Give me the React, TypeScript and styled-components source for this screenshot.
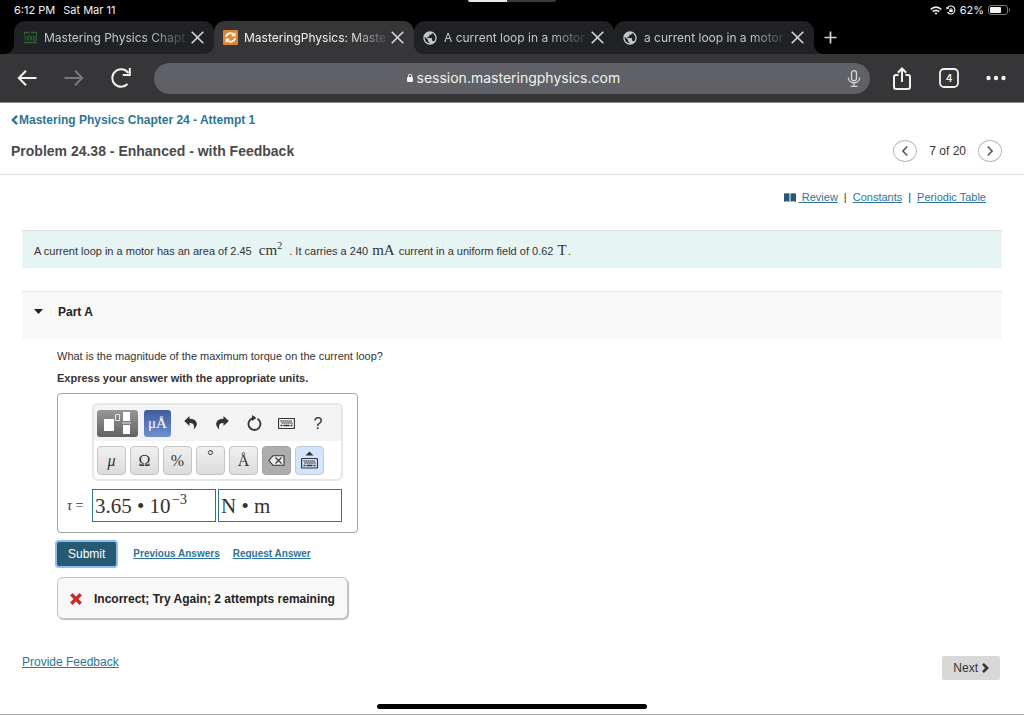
import React from "react";
import styled, { createGlobalStyle, css } from "styled-components";
import { MdPublic } from "react-icons/md";

const sans = `"Liberation Sans", Arial, sans-serif`;
const ui = `Inter, "Liberation Sans", sans-serif`;
const serif = `"Liberation Serif", "Times New Roman", serif`;
const chrome = "#363639";
const dark = "#202124";
const teal = "#2d7596";

const GlobalStyle = createGlobalStyle`
  * { box-sizing: border-box; }
  body { margin: 0; background: #fff; color: #333; font: 11px/16px ${sans}; }
  button, input { font: inherit; color: inherit; margin: 0; padding: 0; border: 0; background: none; }
  svg { display: block; flex: none; }
  h1, h2, p { margin: 0; }
`;

const Screen = styled.div`
  min-height: 100vh;
  display: flex;
  flex-direction: column;
  border-bottom: 1px solid #aaa;
`;

/* Browser frame */

const StatusBar = styled.div`
  position: relative;
  display: flex;
  align-items: flex-start;
  justify-content: space-between;
  height: 21px;
  padding: 0 14px;
  background: #000;
  color: #f2f2f2;
  font: 11px/20px ${ui};
`;
const StatusGroup = styled.div<{ $gap: number }>`
  display: flex;
  align-items: center;
  gap: ${(p) => p.$gap}px;
`;
const SplitHandle = styled.div`
  position: absolute;
  top: 0;
  left: 50%;
  width: 88px;
  height: 2px;
  transform: translateX(-50%);
  border-radius: 0 0 2px 2px;
  background: linear-gradient(90deg, #e8e8e8 44%, #3a3a3c 44%);
`;

const TabStrip = styled.div`
  display: flex;
  align-items: stretch;
  height: 33px;
  padding-left: 14px;
  background: #000;
`;
const Tab = styled.div<{ $active?: boolean }>`
  --tab: ${(p) => (p.$active ? chrome : dark)};
  position: relative;
  z-index: ${(p) => (p.$active ? 1 : 0)};
  flex: 0 1 200px;
  min-width: 0;
  display: flex;
  align-items: center;
  gap: 6px;
  padding: 0 10px 0 8px;
  border-radius: 11px 11px 0 0;
  background: var(--tab);
  color: ${(p) => (p.$active ? "#f1f1f1" : "#c4c7c9")};
  font: 12px/18px ${ui};

  &::before,
  &::after {
    content: "";
    position: absolute;
    bottom: 0;
    width: 10px;
    height: 10px;
  }
  &::before {
    right: 100%;
    background: radial-gradient(circle at 0 0, transparent 10px, var(--tab) 10px);
  }
  &::after {
    left: 100%;
    background: radial-gradient(circle at 100% 0, transparent 10px, var(--tab) 10px);
  }
`;
const TabIcon = styled.span`
  width: 16px;
  display: flex;
  justify-content: center;
`;
const TabTitle = styled.span`
  flex: 1;
  min-width: 0;
  white-space: nowrap;
  mask-image: linear-gradient(90deg, #000 calc(100% - 36px), rgba(0, 0, 0, 0.15));
`;
const TabButton = styled.button`
  display: flex;
  color: #d5d7da;
`;
const NewTab = styled(TabButton)`
  align-items: center;
  padding: 0 10px;
`;

const Toolbar = styled.div`
  display: flex;
  align-items: center;
  height: 49px;
  padding: 0 5px 0 3px;
  border-bottom: 1px solid #8d8d8f;
  background: ${chrome};
  color: #f1f1f1;
`;
const ToolbarButton = styled.button<{ $dim?: boolean }>`
  width: 47px;
  height: 40px;
  display: flex;
  align-items: center;
  justify-content: center;
  color: ${(p) => (p.$dim ? "#77787b" : "#f1f1f1")};
`;
const AddressBar = styled.div`
  flex: 1;
  min-width: 0;
  height: 31px;
  margin: 0 8px 0 10px;
  padding: 0 9px 0 26px;
  display: flex;
  align-items: center;
  border-radius: 16px;
  background: #5f6166;
`;
const Address = styled.div`
  flex: 1;
  display: flex;
  align-items: center;
  justify-content: center;
  gap: 4px;
`;
const AddressInput = styled.input`
  width: 204px;
  font: 14px/20px ${ui};
  color: #f1f1f1;
`;

/* Assignment page */

const Header = styled.header`
  padding: 8px 22px 11px 11px;
  border-bottom: 1px solid #ddd;
`;
const Breadcrumb = styled.a`
  display: inline-flex;
  align-items: center;
  gap: 1px;
  color: ${teal};
  font: bold 12px/18px ${sans};
  text-decoration: none;
`;
const TitleRow = styled.div`
  display: flex;
  align-items: center;
  justify-content: space-between;
  height: 24px;
  margin-top: 10px;
`;
const Title = styled.h1`
  color: #4a4a4a;
  font: bold 14px/18px ${sans};
`;
const Pager = styled.nav`
  display: flex;
  align-items: center;
  gap: 12px;
  font-size: 12px;
`;
const RoundButton = styled.button`
  width: 24px;
  height: 22px;
  display: flex;
  align-items: center;
  justify-content: center;
  border: 1px solid #bbb;
  border-radius: 50%;
  color: #555;
`;

const Content = styled.main`
  flex: 1;
  padding: 14px 22px 0;
`;
const Resources = styled.nav`
  display: flex;
  justify-content: flex-end;
  align-items: center;
  gap: 6px;
  padding-right: 16px;
  line-height: 16px;
`;
const ReviewGroup = styled.span`
  display: flex;
  align-items: center;
  gap: 3px;
`;
const Link = styled.a<{ $bold?: boolean; $size?: number }>`
  color: ${teal};
  font-weight: ${(p) => (p.$bold ? "bold" : "normal")};
  font-size: ${(p) => p.$size ?? 11}px;
  white-space: pre;
  text-decoration: underline;
`;
const Intro = styled.p`
  margin-top: 25px;
  padding: 11px 12px 8px;
  border-top: 1px solid #d6dfde;
  background: #e7f4f4;
  line-height: 18px;
`;
const Unit = styled.span`
  margin: 0 1px;
  font: 15px/16px ${serif};

  sup {
    font-size: 10px;
    line-height: 8px;
    vertical-align: 6px;
  }
`;
const PartHeader = styled.button`
  width: 100%;
  height: 48px;
  margin-top: 23px;
  padding: 0 12px 8px;
  display: flex;
  align-items: center;
  gap: 15px;
  border-top: 1px solid #e6e6e6;
  background: #f8f8f8;
  color: #222;
  font: bold 12px/18px ${sans};
`;
const Part = styled.section`
  padding: 9px 35px 0;
`;
const Prompt = styled.p<{ $bold?: boolean }>`
  margin-bottom: 6px;
  font-weight: ${(p) => (p.$bold ? "bold" : "normal")};
`;

const Editor = styled.div`
  width: 301px;
  max-width: 100%;
  margin-top: 7px;
  padding: 9px 14px 10px 7px;
  border: 1px solid #a4a4a4;
  border-radius: 4px;
`;
const Palette = styled.div`
  margin-left: 27px;
  border: 2px solid #e6e6e6;
  border-radius: 6px;
  overflow: hidden;
`;
const PaletteTop = styled.div`
  display: flex;
  align-items: center;
  height: 36px;
  padding: 0 3px;
  gap: 6px;
  background: #f3f3f3;
  color: #333;
`;
const PaletteBottom = styled.div`
  display: flex;
  align-items: center;
  height: 38px;
  padding: 0 3px;
  gap: 4px;
`;
const Mode = styled.button<{ $active?: boolean }>`
  width: ${(p) => (p.$active ? 27 : 41)}px;
  height: 27px;
  display: flex;
  align-items: center;
  justify-content: center;
  border-radius: 3px;
  background: ${(p) =>
    p.$active ? "linear-gradient(#3f5c9f, #6f90d0)" : "linear-gradient(#97979b, #626262)"};
  color: #fff;
  font: 15px/27px ${serif};
`;
const Tool = styled.button`
  width: 26px;
  height: 27px;
  display: flex;
  align-items: center;
  justify-content: center;
  font: 16px/27px ${sans};
`;
const keyTone = {
  plain: css`border-color: #c4c4c4; background: linear-gradient(#f0f0f0, #dcdcdc);`,
  dark: css`border-color: #a2a2a2; background: #adadad;`,
  blue: css`border-color: #bccbdd; background: #d3e4fb;`,
};
const Key = styled.button<{ $tone?: keyof typeof keyTone; $raised?: boolean }>`
  width: 29px;
  height: 29px;
  display: flex;
  align-items: ${(p) => (p.$raised ? "flex-start" : "center")};
  justify-content: center;
  border: 1px solid;
  border-radius: 4px;
  font: 16px/${(p) => (p.$raised ? 18 : 27)}px ${serif};
  ${(p) => keyTone[p.$tone ?? "plain"]}
`;
const Answer = styled.div`
  display: flex;
  align-items: center;
  gap: 2px;
  margin: 8px 1px 0 0;
`;
const AnswerLabel = styled.label`
  width: 25px;
  padding-left: 2px;
  font: 14px/16px ${serif};
  white-space: nowrap;
`;
const Field = styled.div`
  flex: 1;
  min-width: 0;
  height: 33px;
  display: flex;
  align-items: center;
  padding: 0 2px;
  border: 1px solid ${teal};
`;
const FieldInput = styled.input<{ $width?: number }>`
  width: ${(p) => (p.$width ? `${p.$width}px` : "100%")};
  font: 21px/28px ${serif};
`;
const Exponent = styled.input`
  width: 24px;
  align-self: flex-start;
  font: 14px/20px ${serif};
`;

const Actions = styled.div`
  display: flex;
  align-items: center;
  gap: 13px;
  margin-top: 9px;
`;
const Submit = styled.button`
  height: 24px;
  margin-right: 4px;
  padding: 0 11px;
  border-radius: 2px;
  background: #255a70;
  box-shadow: 0 0 0 2px #8fbcf8;
  color: #fff;
  font-size: 12px;
`;
const Result = styled.div`
  width: fit-content;
  height: 42px;
  display: flex;
  align-items: center;
  gap: 12px;
  margin-top: 11px;
  padding: 1px 12px 0;
  border: 1px solid #c3c3c3;
  border-radius: 6px;
  background: #f8f8f8;
  box-shadow: 1px 1px 1px #bbb;
  color: #222;
  font: bold 12px/16px ${sans};
`;
const Footer = styled.footer`
  display: flex;
  align-items: flex-start;
  justify-content: space-between;
  padding: 0 24px 34px 22px;
`;
const FooterLink = styled(Link)`
  line-height: 12px;
`;
const Next = styled.button`
  height: 24px;
  padding: 0 11px;
  display: flex;
  align-items: center;
  gap: 4px;
  border-radius: 2px;
  background: #d8d8d8;
  font-size: 12px;
`;
const HomeIndicator = styled.div`
  position: fixed;
  bottom: 6px;
  left: 50%;
  width: 270px;
  height: 5px;
  transform: translateX(-50%);
  border-radius: 3px;
  background: #000;
`;

/* Icons */

type StrokeProps = { w: number; h: number; s?: number; children: React.ReactNode };
const Stroke = ({ w, h, s = 2, children }: StrokeProps) => (
  <svg width={w} height={h} viewBox={`0 0 ${w} ${h}`} fill="none" stroke="currentColor" strokeWidth={s} aria-hidden>
    {children}
  </svg>
);
const Close = () => <Stroke w={13} h={13} s={1.6}><path d="M.7.7l11.600 11.600M12.300.7.7 12.300" /></Stroke>;
const Keyboard = () => (
  <Stroke w={17} h={11} s={1}>
    <rect x=".5" y=".5" width="16" height="10" rx="1" strokeWidth="1.2" />
    <path d="M2.500 3h12M3.500 5h11" strokeWidth="1.300" strokeDasharray="1.200 .8" />
    <path d="M2.500 7.500h2m1 0h6m1 0h2" strokeWidth="1.300" />
  </Stroke>
);
const Undo = ({ flip }: { flip?: boolean }) => (
  <svg width="13" height="14" viewBox="0 0 13 14" fill="currentColor" aria-hidden>
    <path
      transform={flip ? "matrix(-1 0 0 1 13 0)" : undefined}
      d="M5.500 0 .2 5l5.300 5V7c3.600-.1 5.300 1.500 4.200 6.500C12.300 11 13.200 9 12.700 7c-.7-3-3.400-4.200-7.200-4.200z"
    />
  </svg>
);
const Sheets = () => (
  <svg width="13" height="13" viewBox="0 0 13 13" fill="none" stroke="#2f6337" aria-hidden>
    <path d="M0 1.500h5.500M7 1.500h6M0 11.500h13" strokeWidth="1.400" />
    <path d="M1 4.500v5M3 4.500v3.500l1.500 1.500V4.500M6 4.500l1 5 1-5M9.500 4.500v5h1.500v-5M.5 2v2M12.500 2v8" strokeWidth=".9" />
  </svg>
);
const Refresh = () => (
  <svg width="15" height="15" viewBox="0 0 15 15" fill="none" aria-hidden>
    <rect width="15" height="15" rx="1" fill="#d9853a" />
    <path d="M3 7c.5-4 5.500-4.500 7.500-2.500M12 8c-.5 4-5.500 4.500-7.500 2.500" stroke="#fff3d0" strokeWidth="2" />
    <path d="M12.500 2v4.500H8zM2.500 13V8.500H7z" fill="#fff3d0" />
  </svg>
);

const tabs = [
  { title: "Mastering Physics Chapt", icon: <Sheets /> },
  { title: "MasteringPhysics: Maste", icon: <Refresh />, active: true },
  { title: "A current loop in a motor", icon: <MdPublic size={16} /> },
  { title: "a current loop in a motor", icon: <MdPublic size={16} /> },
];

const Browser = () => (
  <>
    <StatusBar>
      <StatusGroup $gap={8}><span>6:12 PM</span><span>Sat Mar 11</span></StatusGroup>
      <SplitHandle />
      <StatusGroup $gap={4}>
        <Stroke w={12} h={9} s={2}>
          <path d="M.7 3.500c3-3.100 7.600-3.100 10.600 0M2.800 5.700c1.800-1.800 4.600-1.800 6.400 0" strokeWidth="1.700" />
          <path d="M4.500 7.200c.9-.8 2.100-.8 3 0L6 8.800z" fill="currentColor" stroke="none" />
        </Stroke>
        <Stroke w={10} h={10} s={1.1}>
          <path d="M1.300 3.200a4 4 0 1 1 .2 3.900M.4 2.200l.8 1.600 1.600-.7" />
          <rect x="3.300" y="4.500" width="3.400" height="2.500" fill="currentColor" stroke="none" />
          <path d="M4 4.700c0-1.900 2-1.900 2 0" strokeWidth=".7" />
        </Stroke>
        <span>62%</span>
        <Stroke w={22} h={10} s={1}>
          <rect x=".5" y=".5" width="19" height="9" rx="2.500" stroke="#777" />
          <rect x="2" y="2" width="11" height="6" rx="1" fill="currentColor" stroke="none" />
          <path d="M21.500 3.500v3" stroke="#777" />
        </Stroke>
      </StatusGroup>
    </StatusBar>
    <TabStrip>
      {tabs.map((t) => (
        <Tab key={t.title} $active={t.active}>
          <TabIcon>{t.icon}</TabIcon>
          <TabTitle>{t.title}</TabTitle>
          <TabButton aria-label="Close tab"><Close /></TabButton>
        </Tab>
      ))}
      <NewTab aria-label="New tab"><Stroke w={13} h={13} s={1.7}><path d="M6.500.5v12M.5 6.500h12" /></Stroke></NewTab>
    </TabStrip>
    <Toolbar>
      <ToolbarButton aria-label="Back"><Stroke w={20} h={16}><path d="M19.500 8H2M9 .8 1.800 8 9 15.200" /></Stroke></ToolbarButton>
      <ToolbarButton aria-label="Forward" $dim><Stroke w={20} h={16}><path d="M.5 8H18M11 .8 18.200 8 11 15.200" /></Stroke></ToolbarButton>
      <ToolbarButton aria-label="Reload">
        <Stroke w={20} h={20}><path d="M17.200 4.800A8.800 8.800 0 1 0 16.500 16M18.800 0v7h-7" /></Stroke>
      </ToolbarButton>
      <AddressBar>
        <Address>
          <svg width="6" height="8" viewBox="0 0 6 8" fill="none" aria-hidden>
            <rect y="3" width="6" height="5" rx="1" fill="#f1f1f1" />
            <path d="M1.300 4V2a1.700 1.700 0 0 1 3.400 0v2" stroke="#f1f1f1" />
          </svg>
          <AddressInput aria-label="Address" defaultValue="session.masteringphysics.com" />
        </Address>
        <TabButton aria-label="Voice search">
          <Stroke w={14} h={17} s={1.3}>
            <rect x="4.500" y=".7" width="5" height="10" rx="2.500" />
            <path d="M1.300 7.500c0 7 11.400 7 11.400 0M7 13v3.300M3.500 16.300h7" />
          </Stroke>
        </TabButton>
      </AddressBar>
      <ToolbarButton aria-label="Share">
        <Stroke w={18} h={23}><path d="M5.500 8H3a2 2 0 0 0-2 2v10a2 2 0 0 0 2 2h12a2 2 0 0 0 2-2V10a2 2 0 0 0-2-2h-2.500M9 15V1.500M4.800 5.700 9 1.500l4.200 4.200" /></Stroke>
      </ToolbarButton>
      <ToolbarButton aria-label="4 open tabs">
        <svg width="20" height="20" viewBox="0 0 20 20" aria-hidden>
          <rect x="1" y="1" width="18" height="18" rx="4" fill="none" stroke="currentColor" strokeWidth="1.800" />
          <text x="10" y="14" textAnchor="middle" fontFamily="Inter, sans-serif" fontSize="10" fontWeight="600" fill="currentColor">4</text>
        </svg>
      </ToolbarButton>
      <ToolbarButton aria-label="More">
        <svg width="20" height="6" viewBox="0 0 20 6" fill="currentColor" aria-hidden>
          <circle cx="2.500" cy="3" r="2.200" /><circle cx="10" cy="3" r="2.200" /><circle cx="17.500" cy="3" r="2.200" />
        </svg>
      </ToolbarButton>
    </Toolbar>
  </>
);

export default function App() {
  return (
    <Screen>
      <GlobalStyle />
      <Browser />
      <Header>
        <Breadcrumb href="#assignment">
          <Stroke w={7} h={10} s={2.4}><path d="M6 .9 1.900 5 6 9.100" /></Stroke>
          Mastering Physics Chapter 24 - Attempt 1
        </Breadcrumb>
        <TitleRow>
          <Title>Problem 24.38 - Enhanced - with Feedback</Title>
          <Pager aria-label="Problems">
            <RoundButton aria-label="Previous problem"><Stroke w={6} h={10} s={1.5}><path d="M5.300.5.900 5l4.400 4.500" /></Stroke></RoundButton>
            <span>7 of 20</span>
            <RoundButton aria-label="Next problem"><Stroke w={6} h={10} s={1.5}><path d="M.7.5 5.100 5 .7 9.500" /></Stroke></RoundButton>
          </Pager>
        </TitleRow>
      </Header>
      <Content>
        <Resources>
          <ReviewGroup>
            <svg width="12" height="9" viewBox="0 0 12 9" aria-hidden>
              <path d="M0 .5Q3-.2 5.500.5v8.200Q3 8 0 8.700z" fill="#255a70" />
              <path d="M12 .5Q9-.2 6.500.5v8.200Q9 8 12 8.700z" fill="#255a70" />
              <path d="M6 .5v8" stroke="#8fb3c1" />
            </svg>
            <Link href="#review">{" Review"}</Link>
          </ReviewGroup>
          <span>|</span>
          <Link href="#constants">Constants</Link><span>|</span>
          <Link href="#table">Periodic Table</Link>
        </Resources>
        <Intro>
          A current loop in a motor has an area of 2.45 &nbsp;<Unit>cm<sup>2</sup></Unit> &nbsp;. It carries a 240 <Unit>mA</Unit> current in a uniform field of 0.62 <Unit>T</Unit>.
        </Intro>
        <PartHeader aria-expanded="true">
          <svg width="9" height="5" viewBox="0 0 9 5" fill="currentColor" aria-hidden><path d="M0 0h9L4.500 5z" /></svg>
          Part A
        </PartHeader>
        <Part>
          <Prompt>What is the magnitude of the maximum torque on the current loop?</Prompt>
          <Prompt $bold>Express your answer with the appropriate units.</Prompt>
          <Editor>
            <Palette>
              <PaletteTop>
                <Mode aria-label="Templates">
                  <svg width="28" height="24" viewBox="0 0 28 24" aria-hidden>
                    <path d="M0 8h10v12H0zM19 1h7v9h-7zM19 14h7v9h-7z" fill="#fff" />
                    <path d="M11.500 3.500h4v6h-4zM18 12h9" stroke="#e4e4e4" fill="none" />
                  </svg>
                </Mode>
                <Mode $active>μÅ</Mode>
                <Tool aria-label="Undo"><Undo /></Tool>
                <Tool aria-label="Redo"><Undo flip /></Tool>
                <Tool aria-label="Reset">
                  <Stroke w={15} h={16} s={1.8}><path d="M10.500 3.800a6 6 0 1 1-5-.5" /><path d="M5 0v6l4.500-3z" fill="currentColor" stroke="none" /></Stroke>
                </Tool>
                <Tool aria-label="Keyboard shortcuts"><Keyboard /></Tool>
                <Tool aria-label="Help">?</Tool>
              </PaletteTop>
              <PaletteBottom>
                <Key><i>μ</i></Key>
                <Key>Ω</Key>
                <Key>%</Key>
                <Key $raised>°</Key>
                <Key>Å</Key>
                <Key aria-label="Backspace" $tone="dark">
                  <svg width="17" height="11" viewBox="0 0 17 11" fill="#eee" stroke="#333" strokeWidth="1.100" aria-hidden>
                    <path d="M5 .7h11v9.600H5L1 5.500z" /><path d="m7.500 2.500 6 6m0-6-6 6" />
                  </svg>
                </Key>
                <Key aria-label="Show keyboard" $tone="blue">
                  <svg width="17" height="18" viewBox="0 0 17 18" fill="none" stroke="#333" aria-hidden>
                    <path d="M4.500 4.500h8L8.500.5z" fill="#333" stroke="none" />
                    <rect x=".5" y="7.500" width="16" height="9.500" rx="1" strokeWidth="1.200" />
                    <path d="M2.500 10h12M3.500 12h11" strokeWidth="1.300" strokeDasharray="1.200 .8" />
                    <path d="M2.500 14.500h2m1 0h6m1 0h2" strokeWidth="1.300" />
                  </svg>
                </Key>
              </PaletteBottom>
            </Palette>
            <Answer>
              <AnswerLabel htmlFor="value"><i>τ</i> =</AnswerLabel>
              <Field>
                <FieldInput id="value" $width={77} defaultValue="3.65 • 10" />
                <Exponent aria-label="Exponent" defaultValue="−3" />
              </Field>
              <Field><FieldInput aria-label="Units" defaultValue="N • m" /></Field>
            </Answer>
          </Editor>
          <Actions>
            <Submit>Submit</Submit>
            <Link $bold $size={10} href="#previous">Previous Answers</Link>
            <Link $bold $size={10} href="#request">Request Answer</Link>
          </Actions>
          <Result role="status">
            <svg width="12" height="12" viewBox="0 0 12 12" fill="none" stroke="#cb2a2d" strokeWidth="3.400" aria-hidden>
              <path d="m1.300 1.300 9.400 9.400m0-9.400-9.400 9.400" />
            </svg>
            Incorrect; Try Again; 2 attempts remaining
          </Result>
        </Part>
      </Content>
      <Footer>
        <FooterLink $size={12} href="#feedback">Provide Feedback</FooterLink>
        <Next>Next <Stroke w={7} h={10} s={2.600}><path d="M1 .9 5.100 5 1 9.100" /></Stroke></Next>
      </Footer>
      <HomeIndicator />
    </Screen>
  );
}
